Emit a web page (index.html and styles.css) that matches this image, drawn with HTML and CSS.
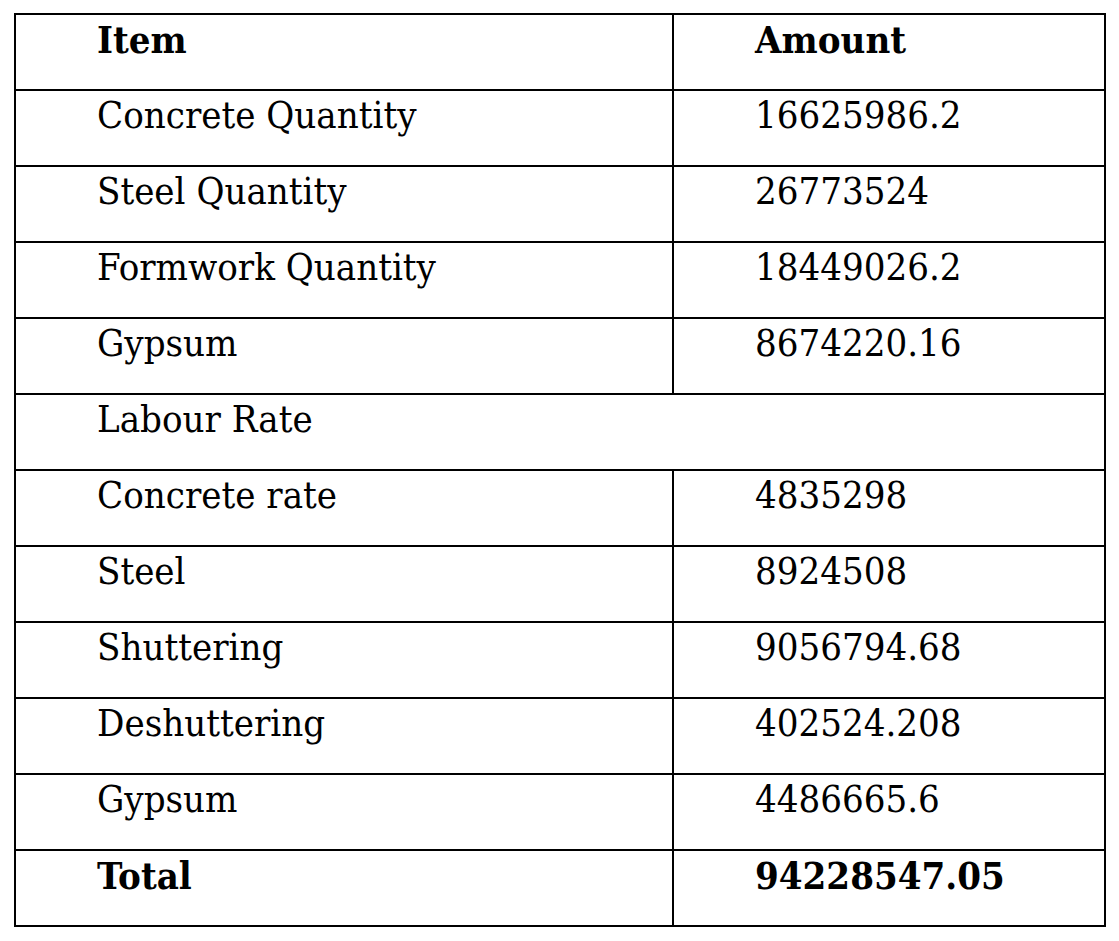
FILE: index.html
```html
<!DOCTYPE html>
<html>
<head>
<meta charset="utf-8">
<link rel="stylesheet" href="styles.css">
</head>
<body>
<table class="cost-table">
  <tr class="head"><td class="c-item">Item</td><td class="c-amt">Amount</td></tr>
  <tr><td class="c-item">Concrete Quantity</td><td class="c-amt">16625986.2</td></tr>
  <tr><td class="c-item">Steel Quantity</td><td class="c-amt">26773524</td></tr>
  <tr><td class="c-item">Formwork Quantity</td><td class="c-amt">18449026.2</td></tr>
  <tr><td class="c-item">Gypsum</td><td class="c-amt">8674220.16</td></tr>
  <tr><td class="c-item c-span" colspan="2">Labour Rate</td></tr>
  <tr><td class="c-item">Concrete rate</td><td class="c-amt">4835298</td></tr>
  <tr><td class="c-item">Steel</td><td class="c-amt">8924508</td></tr>
  <tr><td class="c-item">Shuttering</td><td class="c-amt">9056794.68</td></tr>
  <tr><td class="c-item">Deshuttering</td><td class="c-amt">402524.208</td></tr>
  <tr><td class="c-item">Gypsum</td><td class="c-amt">4486665.6</td></tr>
  <tr class="total"><td class="c-item">Total</td><td class="c-amt">94228547.05</td></tr>
</table>
</body>
</html>
```
FILE: styles.css
```css
html, body {
  margin: 0;
  padding: 0;
  background: #ffffff;
}
body {
  padding: 13px 0 0 14px;
}
.cost-table {
  border-collapse: separate;
  border-spacing: 0;
  border-top: 2px solid #000;
  border-left: 2px solid #000;
  font-family: "DejaVu Serif Condensed", "DejaVu Serif", serif;
  font-stretch: condensed;
  font-size: 38px;
  color: #000;
  table-layout: fixed;
  width: 1092px;
}
.cost-table td {
  box-sizing: border-box;
  height: 76px;
  padding: 2px 0 0 81px;
  vertical-align: top;
  border-right: 2px solid #000;
  border-bottom: 2px solid #000;
  white-space: nowrap;
}
.cost-table .c-item {
  width: 658px;
}
.cost-table .c-amt {
  width: 432px;
}
.cost-table .c-span {
  width: auto;
}
.head td,
.total td {
  font-weight: bold;
}
```
